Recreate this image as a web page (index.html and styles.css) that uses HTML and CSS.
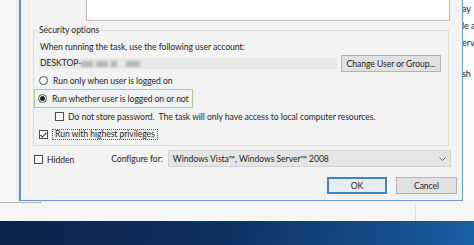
FILE: index.html
```html
<!DOCTYPE html>
<html lang="en">
<head>
  <meta charset="UTF-8">
  <meta name="viewport" content="width=device-width, initial-scale=1.0">
  <title>Create Task</title>
  <link rel="stylesheet" href="styles.css">
</head>
<body>
  <div class="screen">
    <div class="desktop">
      <div class="back-left"></div>
      <div class="back-right"></div>

      <div class="side-window">
        <p>ay</p>
        <p>le a</p>
        <p>ervi</p>
        <p class="far">sh</p>
      </div>

      <div class="dialog">
        <div class="description"></div>

        <div class="group">
          <span class="group-title">Security options</span>
          <p class="hint">When running the task, use the following user account:</p>
          <div class="account-row">
            <div class="account-field">DESKTOP-<span class="smudge"><i></i><i></i><i></i><i></i></span></div>
            <button class="btn change-btn">Change User or Group...</button>
          </div>
          <label class="option"><span class="radio"></span>Run only when user is logged on</label>
          <label class="option focused"><span class="radio checked"></span>Run whether user is logged on or not</label>
          <label class="option sub"><span class="check"></span>Do not store password.&nbsp; The task will only have access to local computer resources.</label>
          <label class="option"><span class="check checked"><svg width="7" height="6" viewBox="0 0 7 6"><path d="M0.5 3 L2.6 5 L6.5 0.6" fill="none" stroke="#333" stroke-width="1.1"/></svg></span><span class="dotted">Run with highest privileges</span></label>
        </div>

        <div class="config-row">
          <label class="option hidden-opt"><span class="check"></span>Hidden</label>
          <span class="config-label">Configure for:</span>
          <div class="combo">
            <span>Windows Vista™, Windows Server™ 2008</span>
            <svg width="7" height="4" viewBox="0 0 7 4"><path d="M0.5 0.5 L3.5 3.5 L6.5 0.5" fill="none" stroke="#666" stroke-width="1"/></svg>
          </div>
        </div>

        <div class="actions">
          <button class="btn ok-btn">OK</button>
          <button class="btn cancel-btn">Cancel</button>
        </div>
      </div>
    </div>
    <div class="taskbar"></div>
  </div>
</body>
</html>
```

FILE: styles.css
```css
body {
  margin: 0;
  font-family: 'Lato', 'Open Sans', sans-serif;
  font-size: 8.6px;
  letter-spacing: -0.05px;
  color: #262626;
}

p {
  margin: 0;
}

.screen {
  width: 474px;
  height: 245px;
  overflow: hidden;
  display: flex;
  flex-direction: column;
}

.desktop {
  position: relative;
  height: 221px;
  background: #f6f6f6;
}

/* bits of windows behind the dialog */
.back-left {
  position: absolute;
  left: 0;
  top: 202px;
  width: 40px;
  height: 1px;
  background: #b4b8bd;
  border-right: 1px solid #888;
}

.back-right {
  position: absolute;
  left: 415px;
  top: 205px;
  width: 59px;
  height: 16px;
  border-left: 1px solid #dedede;
}

.side-window {
  position: absolute;
  left: 462px;
  top: 0;
  width: 12px;
  height: 200px;
  overflow: hidden;
  background: #fbfbfb;
  padding-top: 3px;
  box-sizing: border-box;
  white-space: nowrap;
  line-height: 12px;
  font-size: 9px;
}

.side-window p {
  margin-bottom: 5px;
}

.side-window .far {
  margin-top: 19px;
}

.dialog {
  position: absolute;
  left: 19px;
  top: -10px;
  width: 444px;
  height: 211px;
  box-sizing: border-box;
  background: #f3f3f3;
  border: 1px solid #6e9bd0;
  border-left: 2px solid #5a93d6;
  box-shadow: -2px 0 2px rgba(0, 0, 0, 0.08);
  display: flex;
  flex-direction: column;
}

.description {
  margin-left: 65px;
  width: 364px;
  height: 30px;
  box-sizing: border-box;
  background: #fff;
  border: 1px solid #b9b9b9;
}

.group {
  margin: 9px 0 0 12px;
  width: 416px;
  height: 116px;
  box-sizing: border-box;
  border: 1px solid #dcdcdc;
  display: flex;
  flex-direction: column;
  align-items: flex-start;
}

.group-title {
  margin: -7px 0 0 4px;
  padding: 0 1px;
  line-height: 12px;
  background: #f3f3f3;
}

.hint {
  margin: 5px 0 0 6px;
  line-height: 12px;
}

.account-row {
  margin-top: 2px;
  display: flex;
  align-items: center;
  height: 17px;
}

.account-field {
  margin-left: 5px;
  width: 298px;
  height: 11px;
  line-height: 11px;
  background: #e8e8e8;
  padding-left: 1px;
  box-sizing: border-box;
  display: flex;
  align-items: center;
}

.smudge {
  display: flex;
  align-items: center;
  gap: 3px;
  filter: blur(1.2px);
}

.smudge i {
  display: block;
  width: 12px;
  height: 6px;
  background: #b8b8b8;
}

.smudge i:nth-child(3) {
  width: 6px;
}

.smudge i:nth-child(4) {
  margin-left: 6px;
  width: 14px;
}

.btn {
  font: inherit;
  letter-spacing: inherit;
  color: #262626;
  background: #e1e1e1;
  border: 1px solid #b3b3b3;
  padding: 0;
  height: 17px;
  box-sizing: border-box;
  white-space: nowrap;
}

.change-btn {
  margin-left: 4px;
  width: 100px;
}

.option {
  display: flex;
  align-items: center;
  height: 13px;
  margin-left: 5px;
  white-space: nowrap;
}

.option:nth-of-type(1) {
  margin-top: 2px;
}

.option.focused {
  margin: 2px 0 0 0;
  height: 19px;
  width: 159px;
  box-sizing: border-box;
  padding-left: 3px;
  border: 1px solid #a9cf8c;
}

.option.sub {
  margin: 2px 0 0 21px;
}

.option.sub + .option {
  margin-top: 5px;
}

.radio {
  width: 9px;
  height: 9px;
  box-sizing: border-box;
  border: 1px solid #4d4d4d;
  border-radius: 50%;
  margin-right: 5px;
  background: #fff;
  display: flex;
  align-items: center;
  justify-content: center;
}

.radio.checked::after {
  content: '';
  width: 5px;
  height: 5px;
  border-radius: 50%;
  background: #222;
}

.check {
  width: 9px;
  height: 9px;
  box-sizing: border-box;
  border: 1px solid #4d4d4d;
  margin-right: 4px;
  background: #fff;
  display: flex;
  align-items: center;
  justify-content: center;
}

.dotted {
  border: 1px dotted #555;
  padding: 0 2px;
  line-height: 9px;
}

.config-row {
  margin: 4px 0 0 13px;
  display: flex;
  align-items: center;
  height: 17px;
}

.hidden-opt {
  margin-left: 0;
}

.config-label {
  margin-left: 37px;
}

.combo {
  margin-left: 5px;
  width: 283px;
  height: 17px;
  box-sizing: border-box;
  background: #e5e5e5;
  border: 1px solid #d3d3d3;
  display: flex;
  align-items: center;
  justify-content: space-between;
  padding: 0 4px;
}

.actions {
  margin-top: 10px;
  padding-right: 5px;
  display: flex;
  justify-content: flex-end;
  gap: 9px;
}

.ok-btn {
  width: 60px;
  background: #e3edf7;
  border: 2px solid #3d85c6;
}

.cancel-btn {
  width: 61px;
}

.taskbar {
  height: 24px;
  background: linear-gradient(100deg, #0a2448 0%, #0d2f5e 45%, #15508f 85%, #1b60a6 100%);
}
```
